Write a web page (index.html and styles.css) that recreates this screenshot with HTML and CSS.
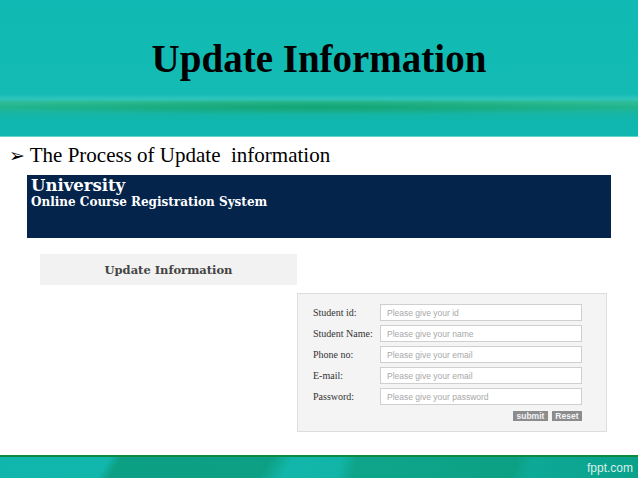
FILE: index.html
```html
<!DOCTYPE html>
<html>
<head>
<meta charset="utf-8">
<link rel="stylesheet" href="styles.css">
</head>
<body>
<div class="slide">
  <header class="header">
    <h1 class="title">Update Information</h1>
  </header>
  <main class="content">
    <p class="bullet"><span class="arrow">&#10146;</span> The Process of Update&nbsp; information</p>
    <div class="banner">
      <div class="banner-title">University</div>
      <div class="banner-sub">Online Course Registration System</div>
    </div>
    <div class="section-head">Update Information</div>
    <div class="form-box">
      <div class="row"><span class="label">Student id:</span><span class="input">Please give your id</span></div>
      <div class="row"><span class="label">Student Name:</span><span class="input">Please give your name</span></div>
      <div class="row"><span class="label">Phone no:</span><span class="input">Please give your email</span></div>
      <div class="row"><span class="label">E-mail:</span><span class="input">Please give your email</span></div>
      <div class="row"><span class="label">Password:</span><span class="input">Please give your password</span></div>
      <div class="buttons"><span class="btn">submit</span><span class="btn">Reset</span></div>
    </div>
  </main>
  <footer class="footer">
    <span class="brand">fppt.com</span>
  </footer>
</div>
</body>
</html>
```

FILE: styles.css
```css
html, body {
  margin: 0;
  padding: 0;
  background: #ffffff;
}
.slide {
  width: 638px;
  height: 478px;
  display: flex;
  flex-direction: column;
  overflow: hidden;
  font-family: "Liberation Serif", "Times New Roman", serif;
}
.header {
  height: 137px;
  flex: none;
  box-sizing: border-box;
  border-bottom: 1px solid #5fd3cc;
  background:
    radial-gradient(ellipse 330px 8px at 50% 107px, rgba(16,160,110,0.8), rgba(16,160,110,0) 100%),
    linear-gradient(to bottom, #10b9b3 0px, #14bbb5 94px, #2ec5bd 99px, #2fbd96 102px, #22b68f 107px, #15b5a6 114px, #0fb6ae 122px, #10b7b1 136px);
  display: flex;
  justify-content: center;
}
.title {
  margin: 37px 0 0 0;
  font-size: 39px;
  font-weight: bold;
  color: #000;
  line-height: 44px;
  height: 44px;
}
.content {
  flex: 1;
  display: flex;
  flex-direction: column;
}
.bullet {
  margin: 6px 0 0 9px;
  font-size: 21px;
  line-height: 24px;
  color: #000;
}
.arrow {
  font-family: "DejaVu Sans", sans-serif;
  font-size: 19px;
}
.banner {
  margin: 8px 0 0 27px;
  width: 584px;
  height: 63px;
  background: #04244c;
  color: #fff;
  box-sizing: border-box;
  padding: 2px 0 0 4px;
  font-family: "DejaVu Serif", serif;
}
.banner-title {
  font-size: 16.5px;
  font-weight: bold;
  line-height: 18px;
}
.banner-sub {
  font-size: 12px;
  font-weight: bold;
  line-height: 14px;
}
.section-head {
  margin: 16px 0 0 40px;
  width: 257px;
  height: 31px;
  background: #f2f2f2;
  color: #444;
  font-family: "DejaVu Serif", serif;
  font-size: 11.5px;
  font-weight: bold;
  display: flex;
  align-items: center;
  justify-content: center;
}
.form-box {
  margin: 8px 0 0 297px;
  width: 310px;
  height: 139px;
  box-sizing: border-box;
  background: #f4f4f4;
  border: 1px solid #dddddd;
  padding: 10px 24px 0 15px;
  display: flex;
  flex-direction: column;
  gap: 4px;
}
.row {
  display: flex;
  align-items: center;
  height: 17px;
}
.label {
  width: 67px;
  font-size: 10px;
  color: #333;
}
.input {
  flex: 1;
  height: 17px;
  box-sizing: border-box;
  background: #fff;
  border: 1px solid #cfcfcf;
  font-family: "Liberation Sans", Arial, sans-serif;
  font-size: 8.5px;
  color: #a8a8a8;
  padding-left: 6px;
  display: flex;
  align-items: center;
}
.buttons {
  display: flex;
  justify-content: flex-end;
  gap: 4px;
  margin-top: 2px;
}
.btn {
  background: #8c8c8c;
  color: #f4f4f4;
  font-family: "Liberation Sans", Arial, sans-serif;
  font-size: 8.5px;
  font-weight: bold;
  height: 10px;
  line-height: 10px;
  padding: 0 3.5px;
}
.footer {
  height: 21px;
  flex: none;
  border-top: 2px solid #0d8a3e;
  background:
    linear-gradient(120deg, rgba(0,0,0,0) 0px, rgba(0,0,0,0) 95px, rgba(8,140,100,0.55) 105px, rgba(8,140,100,0.55) 235px, rgba(0,0,0,0) 255px),
    linear-gradient(105deg, rgba(0,0,0,0) 0px, rgba(0,0,0,0) 330px, rgba(10,150,110,0.5) 345px, rgba(10,150,110,0.5) 500px, rgba(0,0,0,0) 515px),
    linear-gradient(to right, #10b6ab 0%, #12b8ac 40%, #10b0a2 70%, #0aa18a 100%);
  display: flex;
  justify-content: flex-end;
  align-items: center;
}
.brand {
  font-family: "Liberation Sans", Arial, sans-serif;
  font-size: 12px;
  color: #d8f0ea;
  margin-right: 5px;
}
```
